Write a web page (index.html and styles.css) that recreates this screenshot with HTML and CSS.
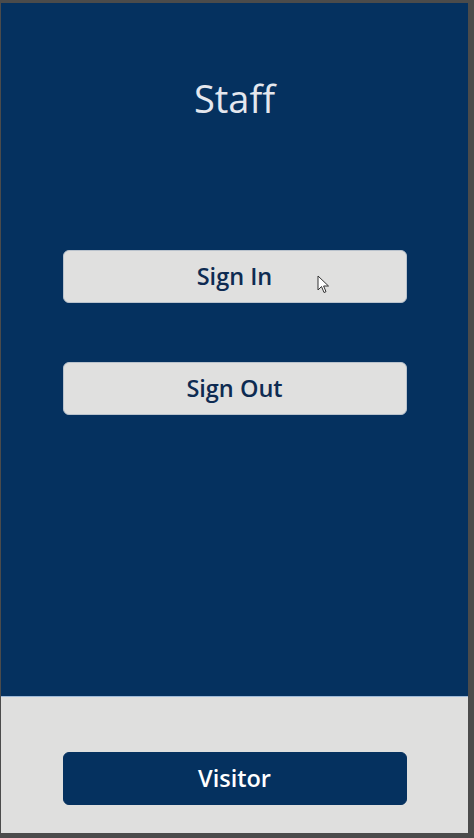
FILE: index.html
```html
<!DOCTYPE html>
<html lang="en">

<head>
    <meta charset="UTF-8">
    <meta name="viewport" content="width=device-width, initial-scale=1.0">
    <title>Staff</title>
    <link rel="stylesheet" href="styles.css">
</head>

<body>
    <div class="frame">
        <div class="app">
            <!-- Staff Section -->
            <div class="staff">
                <h1 class="title">Staff</h1>
                <div class="actions">
                    <button class="btn btn-light">Sign In</button>
                    <button class="btn btn-light">Sign Out</button>
                </div>
            </div>

            <!-- Visitor Section -->
            <div class="visitor">
                <button class="btn btn-dark">Visitor</button>
            </div>
        </div>

        <svg class="cursor" width="14" height="20" viewBox="0 0 14 20">
            <path d="M1 1 L1 15 L4.5 11.5 L7 17.5 L9 16.7 L6.6 11 L11.5 11 Z" fill="#fff" stroke="#333" stroke-width="1"/>
        </svg>
    </div>
</body>

</html>
```

FILE: styles.css
```css
body {
    font-family: 'Open Sans', 'Noto Sans', sans-serif;
    background-color: #4b4b4b;
    margin: 0;
    padding: 0;
}

.frame {
    position: relative;
    width: 474px;
    height: 838px;
    padding: 3px 6px 5px 1px;
    box-sizing: border-box;
}

.app {
    display: flex;
    flex-direction: column;
    height: 100%;
}

.staff {
    background-color: #05315f;
    height: 693px;
    display: flex;
    flex-direction: column;
    align-items: center;
    border-bottom: 1px solid #9fbad8;
}

.title {
    margin: 69px 0 0;
    font-size: 38px;
    font-weight: 400;
    color: #e4e7ee;
}

.actions {
    margin-top: 126px;
    display: flex;
    flex-direction: column;
    gap: 59px;
}

.visitor {
    flex: 1;
    background-color: #dfdfde;
    display: flex;
    justify-content: center;
    padding-top: 55px;
}

.btn {
    width: 344px;
    height: 53px;
    border-radius: 6px;
    font-family: inherit;
    font-size: 23.5px;
    font-weight: 600;
    line-height: 1;
    padding: 0;
    cursor: pointer;
    display: flex;
    align-items: center;
    justify-content: center;
}

.btn-light {
    background-color: #e0e0df;
    color: #0e2b52;
    border: 1px solid #b9c2cc;
}

.btn-dark {
    background-color: #05315f;
    color: #fff;
    border: 1px solid #05315f;
}

.cursor {
    position: absolute;
    left: 317px;
    top: 275px;
}
```
